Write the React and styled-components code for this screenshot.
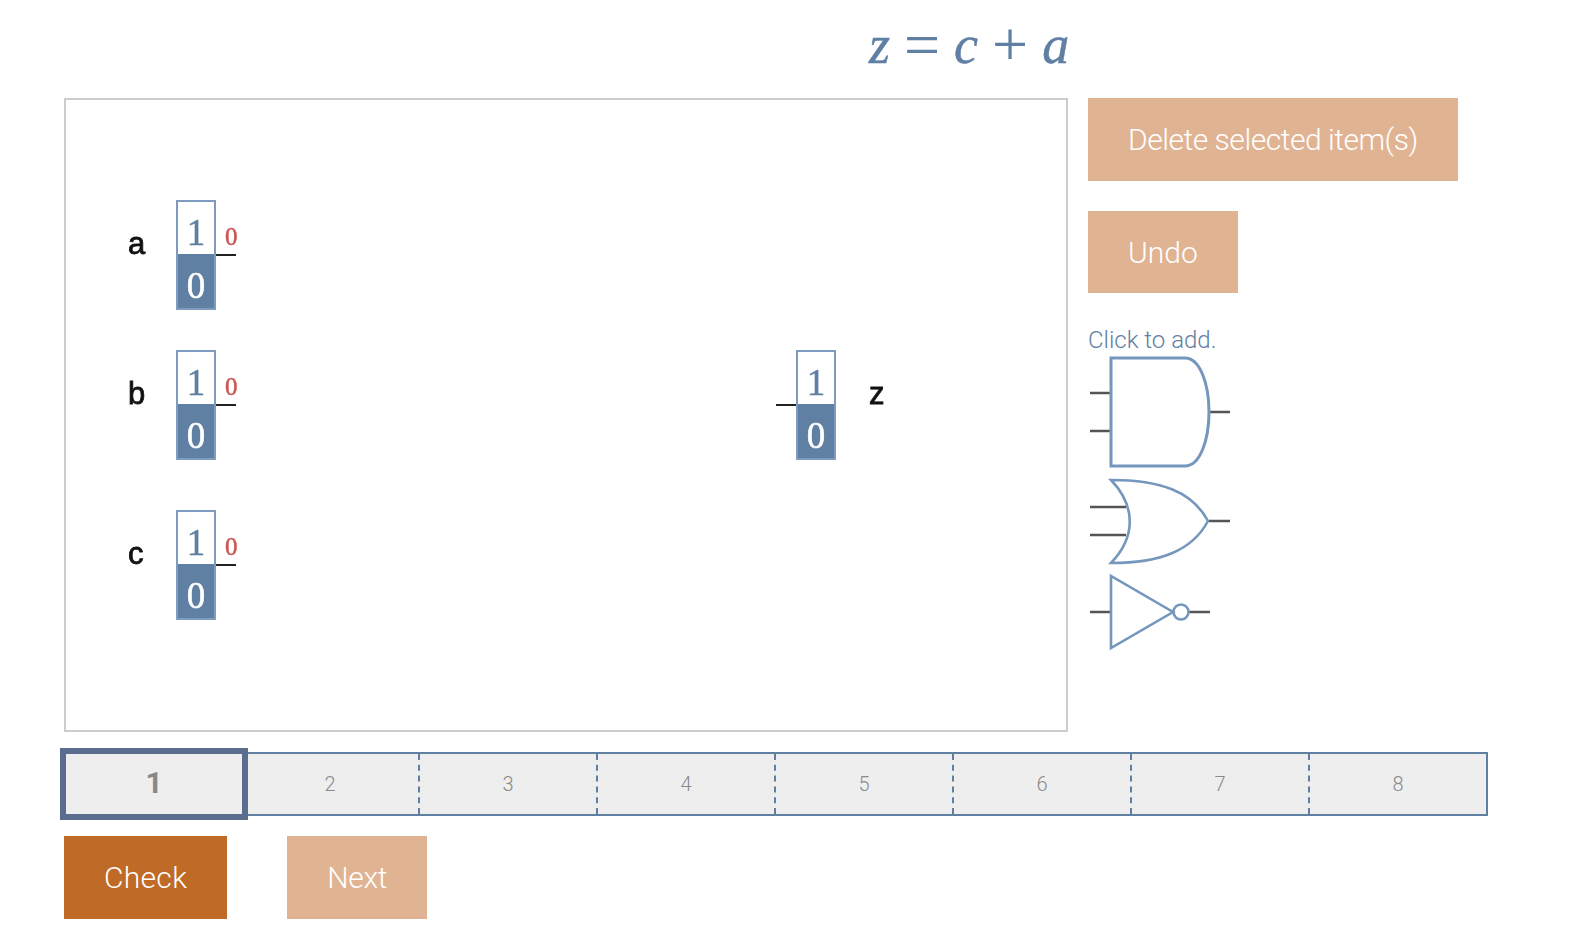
import React from 'react';
import styled, { createGlobalStyle } from 'styled-components';

const GlobalStyle = createGlobalStyle`
  html, body {
    margin: 0;
    padding: 0;
    background: #fff;
  }
`;

const Page = styled.div`
  width: 1588px;
  height: 944px;
  box-sizing: border-box;
  padding-left: 64px;
  overflow: hidden;
  font-family: Roboto, "Liberation Sans", sans-serif;
`;
const Formula = styled.div`
  height: 98px;
  padding: 16px 0 0 805px;
  box-sizing: border-box;
  display: flex;
  align-items: baseline;
  gap: 14px;
  font-family: "Liberation Serif", serif;
  line-height: 52px;
  color: #5f7fa3;
`;
const MathVar = styled.i`
  font-size: 54px;
  font-style: italic;
  -webkit-text-stroke: 0.5px #5f7fa3;
`;
const MathOp = styled.span`
  font-size: 64px;
  transform: translateY(3px);
`;
const Main = styled.div`
  display: flex;
  gap: 20px;
`;
const Canvas = styled.div`
  position: relative;
  width: 1004px;
  height: 634px;
  box-sizing: border-box;
  border: 2px solid #cccccc;
`;
const Node = styled.div`
  position: absolute;
  left: ${(p) => p.$x}px;
  top: ${(p) => p.$y}px;
  width: 40px;
  height: 110px;
  filter: blur(0.4px);
`;
const SwitchBox = styled.div`
  width: 40px;
  height: 110px;
  box-sizing: border-box;
  border: 2px solid #7f9cc0;
  display: flex;
  flex-direction: column;
`;
const Digit = styled.div`
  height: ${(p) => (p.$on ? 52 : 56)}px;
  box-sizing: border-box;
  padding-top: 9px;
  display: flex;
  align-items: center;
  justify-content: center;
  font-family: "Liberation Serif", serif;
  font-size: 37px;
  color: ${(p) => (p.$on ? '#5f7fa3' : '#ffffff')};
  -webkit-text-stroke: 0.5px ${(p) => (p.$on ? '#5f7fa3' : '#ffffff')};
  background: ${(p) => (p.$on ? '#ffffff' : '#5f7fa3')};
`;
const Wire = styled.div`
  position: absolute;
  top: 54px;
  left: ${(p) => (p.$side === 'left' ? -20 : 40)}px;
  width: 20px;
  height: 2px;
  background: #222;
`;
const Value = styled.div`
  position: absolute;
  left: 49px;
  top: 23px;
  font-family: "Liberation Serif", serif;
  font-size: 25px;
  line-height: 28px;
  color: #cc5552;
  -webkit-text-stroke: 0.5px #cc5552;
`;
const Label = styled.div`
  position: absolute;
  left: ${(p) => p.$x}px;
  top: ${(p) => p.$y}px;
  font-family: "Liberation Sans", sans-serif;
  font-size: 31px;
  line-height: 36px;
  color: #111;
  -webkit-text-stroke: 0.8px #111;
  filter: blur(0.4px);
`;
const Side = styled.div`
  display: flex;
  flex-direction: column;
  align-items: flex-start;
`;
const Button = styled.button`
  border: 0;
  margin: 0;
  padding: 0 40px;
  height: 83px;
  background: ${(p) => (p.$primary ? '#bf6a26' : '#e0b493')};
  color: #fff;
  font-family: Roboto, "Liberation Sans", sans-serif;
  font-weight: 300;
  font-size: 30px;
  letter-spacing: ${(p) => p.$track}px;
`;
const UndoButton = styled(Button)`
  height: 82px;
  margin-top: 30px;
`;
const Hint = styled.div`
  margin-top: 33px;
  font-size: 24px;
  font-weight: 300;
  line-height: 28px;
  color: #5f7fa3;
`;
const Gates = styled.svg`
  display: block;
  margin-top: 1px;
  filter: blur(0.4px);
`;
const TabBar = styled.div`
  display: flex;
  width: 1424px;
  height: 64px;
  box-sizing: border-box;
  margin-top: 20px;
  border: 2px solid #5f7fa3;
  background: #eeeeee;
`;
const Tab = styled.div`
  flex: 0 0 178px;
  box-sizing: border-box;
  display: flex;
  align-items: center;
  justify-content: center;
  font-size: 20px;
  font-weight: 300;
  color: #8a8a8a;
  border-left: 2px dashed #5f7fa3;
`;
const ActiveTab = styled.div`
  flex: 0 0 176px;
  margin-right: -2px;
  padding-bottom: 3px;
  box-sizing: border-box;
  position: relative;
  z-index: 1;
  display: flex;
  align-items: center;
  justify-content: center;
  background: #eeeeee;
  font-size: 30px;
  font-weight: 700;
  color: #888888;
  outline: 6px solid #5b6d8f;
`;
const Actions = styled.div`
  display: flex;
  gap: 60px;
  margin-top: 20px;
`;

const inputs = [
  { name: 'a', top: 100 },
  { name: 'b', top: 250 },
  { name: 'c', top: 410 },
];

function Switch({ x, y, side, value }) {
  return (
    <Node $x={x} $y={y}>
      <SwitchBox>
        <Digit $on>1</Digit>
        <Digit>0</Digit>
      </SwitchBox>
      <Wire $side={side} />
      {value && <Value>{value}</Value>}
    </Node>
  );
}

function GatePalette() {
  const body = { fill: 'none', stroke: '#7596bd' };
  const wire = { stroke: '#555', strokeWidth: 2.6 };
  return (
    <Gates width="150" height="300" viewBox="1088 356 150 300">
      <path d="M1090 394H1111M1090 432H1111M1209 413H1230" {...wire} />
      <path d="M1111 359H1185C1200 359 1209 385 1209 413C1209 441 1200 467 1185 467H1111Z" strokeWidth="3" {...body} />
      <path d="M1090 508H1126M1090 536H1126M1209 522H1230" {...wire} />
      <path d="M1111 481C1160 481 1192 492 1208 522C1192 552 1160 564 1111 564C1136 538 1136 507 1111 481Z" strokeWidth="2.6" {...body} />
      <path d="M1090 613H1111M1189 613H1210" {...wire} />
      <path d="M1111 577V649L1173 613Z" strokeWidth="2.6" {...body} />
      <circle cx="1181" cy="613" r="7.5" strokeWidth="2.6" {...body} />
    </Gates>
  );
}

export default function App() {
  return (
    <Page>
      <GlobalStyle />
      <Formula>
        <MathVar>z</MathVar>
        <MathOp>=</MathOp>
        <MathVar>c</MathVar>
        <MathOp>+</MathOp>
        <MathVar>a</MathVar>
      </Formula>
      <Main>
        <Canvas>
          {inputs.map((item) => (
            <React.Fragment key={item.name}>
              <Label $x={62} $y={item.top + 26}>{item.name}</Label>
              <Switch x={110} y={item.top} side="right" value="0" />
            </React.Fragment>
          ))}
          <Switch x={730} y={250} side="left" />
          <Label $x={803} $y={276}>z</Label>
        </Canvas>
        <Side>
          <Button $track={-0.47}>Delete selected item(s)</Button>
          <UndoButton $track={0}>Undo</UndoButton>
          <Hint>Click to add.</Hint>
          <GatePalette />
        </Side>
      </Main>
      <TabBar>
        <ActiveTab>1</ActiveTab>
        {[2, 3, 4, 5, 6, 7, 8].map((n) => (
          <Tab key={n}>{n}</Tab>
        ))}
      </TabBar>
      <Actions>
        <Button $primary $track={0.3}>Check</Button>
        <Button $track={-0.3}>Next</Button>
      </Actions>
    </Page>
  );
}
